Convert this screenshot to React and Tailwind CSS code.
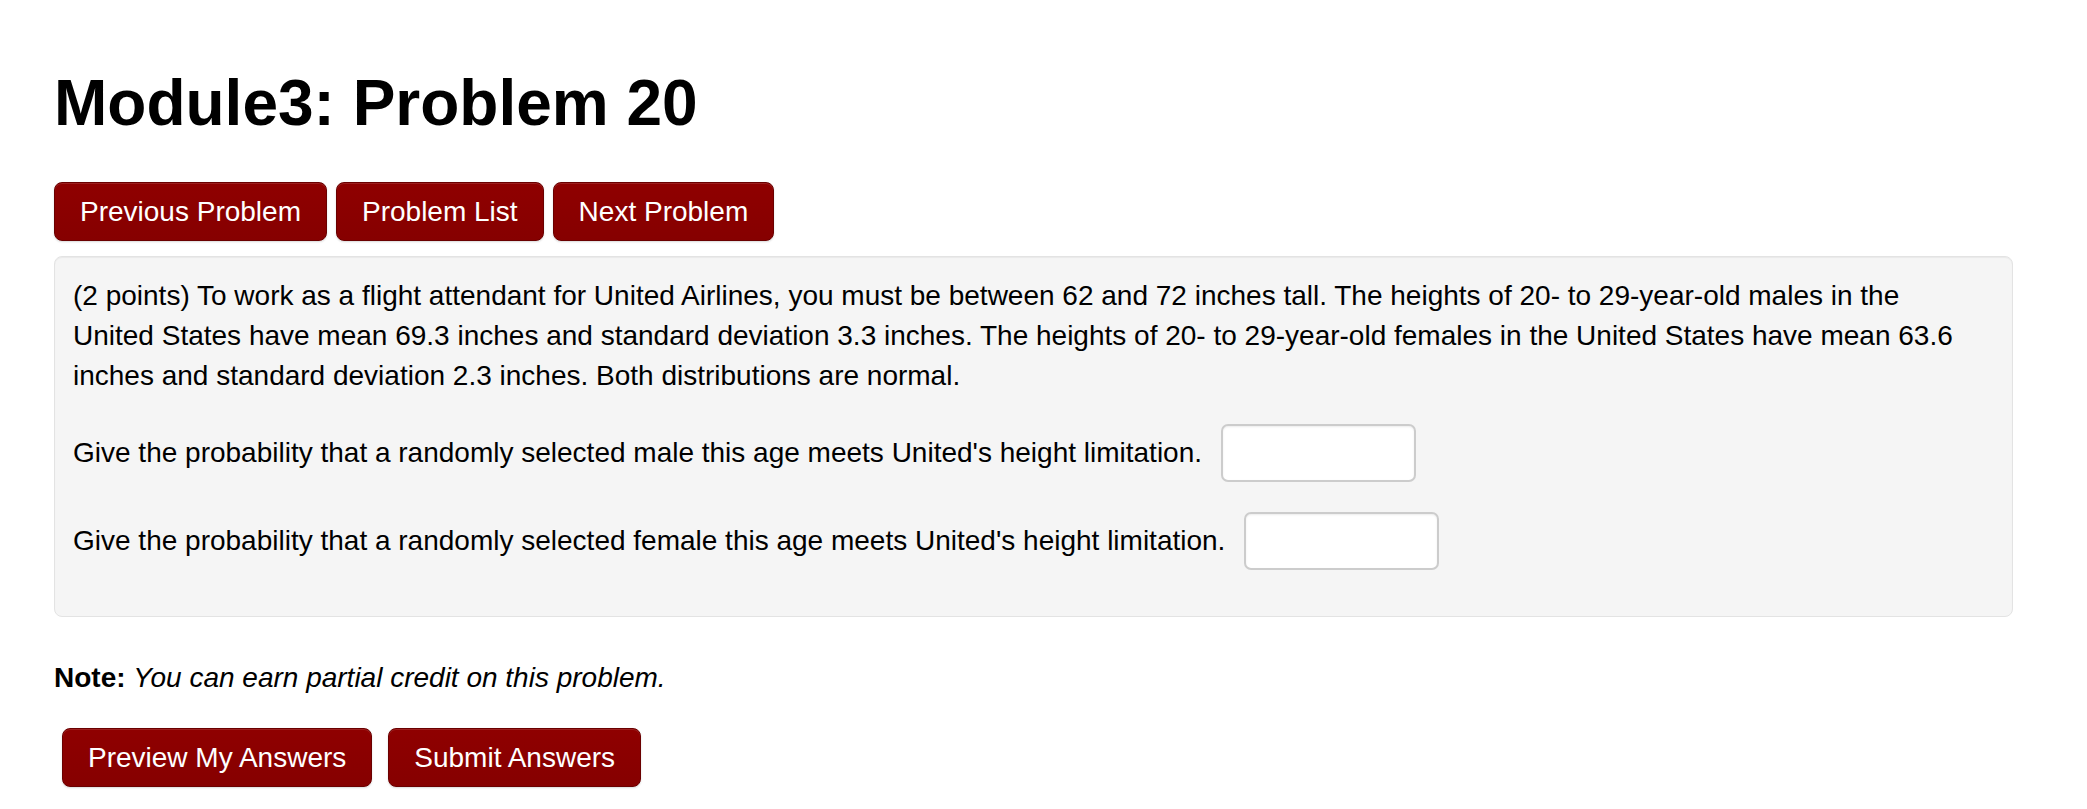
// App.jsx
// A WeBWorK-style problem page: title, navigation buttons, the problem text
// with two answer blanks, a note and the submit buttons.
import { useState } from "react";

const font = { fontFamily: '"Liberation Sans", Arial, Helvetica, sans-serif' };

// Shared look for the dark red buttons.
const btn =
  "rounded-[8px] border border-[#6a0000] bg-gradient-to-b from-[#8f0000] to-[#860000] px-[25px] h-[59px] text-[28px] leading-none text-white shadow-[inset_0_1px_0_rgba(255,255,255,0.12),0_1px_2px_rgba(0,0,0,0.15)]";

function AnswerRow({ label, value, onChange }) {
  return (
    <div className="flex items-center gap-[19px]">
      <span>{label}</span>
      <input
        type="text"
        value={value}
        onChange={(e) => onChange(e.target.value)}
        className="h-[58px] w-[195px] rounded-[7px] border-2 border-[#cccccc] bg-white px-3 text-[28px] outline-none shadow-[inset_0_1px_2px_rgba(0,0,0,0.08)]"
      />
    </div>
  );
}

export default function App() {
  const [male, setMale] = useState("");
  const [female, setFemale] = useState("");

  return (
    <div className="min-h-screen bg-white pl-[54px] pt-[68px] text-black" style={font}>
      <h1 className="text-[64px] font-bold leading-[1.1]">Module3: Problem 20</h1>

      {/* Navigation */}
      <div className="mt-[44px] flex gap-[9px]">
        <button className={btn}>Previous Problem</button>
        <button className={btn}>Problem List</button>
        <button className={btn}>Next Problem</button>
      </div>

      {/* Problem body */}
      <div className="mt-[15px] w-[1959px] rounded-[8px] border border-[#e3e3e3] bg-[#f5f5f5] px-[18px] pt-[19px] pb-[19px] text-[28px] leading-[40px] shadow-[inset_0_1px_1px_rgba(0,0,0,0.05)]">
        <p className="mb-[28px]">
          (2 points) To work as a flight attendant for United Airlines, you must be between 62 and 72
          inches tall. The heights of 20- to 29-year-old males in the
          <br />
          United States have mean 69.3 inches and standard deviation 3.3 inches. The heights of 20- to
          29-year-old females in the United States have mean 63.6
          <br />
          inches and standard deviation 2.3 inches. Both distributions are normal.
        </p>
        <div className="mb-[30px]">
          <AnswerRow
            label="Give the probability that a randomly selected male this age meets United's height limitation."
            value={male}
            onChange={setMale}
          />
        </div>
        <div className="mb-[27px]">
          <AnswerRow
            label="Give the probability that a randomly selected female this age meets United's height limitation."
            value={female}
            onChange={setFemale}
          />
        </div>
      </div>

      <p className="mt-[41px] text-[28px] leading-[40px]">
        <b>Note:</b> <i>You can earn partial credit on this problem.</i>
      </p>

      <div className="mt-[30px] flex gap-[16px] pl-[8px]">
        <button className={btn}>Preview My Answers</button>
        <button className={btn}>Submit Answers</button>
      </div>
    </div>
  );
}
